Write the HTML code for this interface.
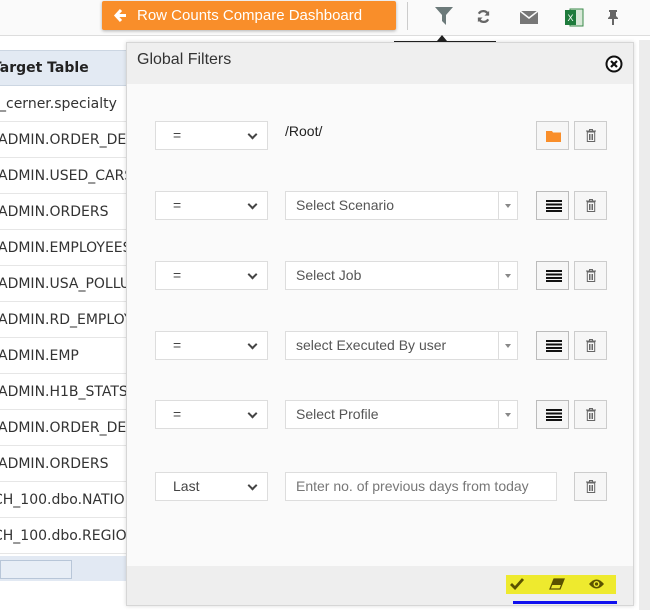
<!DOCTYPE html>
<html><head><style>
*{box-sizing:border-box;margin:0;padding:0}
body{width:650px;height:610px;position:relative;overflow:hidden;background:#fff;font-family:"Liberation Sans",sans-serif}
.abs{position:absolute}
.row{position:absolute;left:0;width:128px;height:36px;border-bottom:1px solid #e6e6e6;font-family:"DejaVu Sans",sans-serif;font-size:14px;color:#333;line-height:36px;padding-left:0;white-space:nowrap;overflow:hidden}
.sel{position:absolute;left:155px;width:113px;height:29px;border:1px solid #ddd;background:#fff;font-size:14px;color:#444;line-height:27px;padding-left:17px}
.sel:after{content:"";position:absolute;right:11px;top:9px;width:5px;height:5px;border-right:2px solid #444;border-bottom:2px solid #444;transform:rotate(45deg)}
.inp{position:absolute;left:285px;width:233px;height:29px;border:1px solid #ddd;background:#fff;font-size:14px;color:#555;line-height:27px;padding-left:10px}
.inp .d{position:absolute;right:0;top:0;width:19px;height:27px;border-left:1px solid #ddd}
.inp .d:after{content:"";position:absolute;left:6px;top:12px;border:3.5px solid transparent;border-top:4px solid #888}
.btn{position:absolute;width:33px;height:29px;border:1px solid #ccc;background:#f6f6f6}
.tr{position:absolute;left:11px;top:7px;width:10px;height:13px}
</style></head><body>
<div class="abs" style="left:0;top:0;width:650px;height:36px;background:#fafafa;border-bottom:1px solid #ddd"></div>
<div class="abs" style="left:102px;top:1px;width:294px;height:29px;background:#f98e2a;border-radius:2px;box-shadow:0 1px 3px rgba(0,0,0,.3);color:#fff;font-size:15px;line-height:29px;padding-left:35px">Row Counts Compare Dashboard</div>
<svg class="abs" style="left:113px;top:8px" width="15" height="15" viewBox="0 0 15 15"><path d="M8 2L3 7.5L8 13M3 7.5H13" stroke="#fff" stroke-width="3" fill="none"/></svg>
<div class="abs" style="left:407px;top:2px;width:1px;height:28px;background:#ccc"></div>
<svg class="abs" style="left:434px;top:6px" width="20" height="20" viewBox="0 0 20 20"><path d="M1 1H19L12 9V19L8 15V9Z" fill="#6c7a7a"/></svg>
<svg class="abs" style="left:476px;top:9px" width="15" height="15" viewBox="0 0 16 16"><path d="M13 6A5.5 5.5 0 0 0 3 5M3 10A5.5 5.5 0 0 0 13 11" stroke="#666" stroke-width="2.4" fill="none"/><path d="M14 2V7H9ZM2 14V9H7Z" fill="#666"/></svg>
<svg class="abs" style="left:520px;top:11px" width="18" height="13" viewBox="0 0 18 13"><rect width="18" height="13" fill="#777"/><path d="M0 0L9 7L18 0" stroke="#fafafa" stroke-width="1.5" fill="none"/></svg>
<svg class="abs" style="left:564px;top:8px" width="20" height="19" viewBox="0 0 20 19"><rect x="6" y="1" width="13" height="17" fill="#d8e8d8" stroke="#3a8a4a"/><rect x="1" y="2" width="11" height="15" fill="#1e7b3c"/><text x="3.5" y="13" font-size="9" fill="#fff" font-family="Liberation Sans">X</text></svg>
<svg class="abs" style="left:607px;top:9px" width="12" height="16" viewBox="0 0 12 16"><path d="M2 1H10V3H9V7L11 9V10H7V16H5V10H1V9L3 7V3H2Z" fill="#666"/></svg>
<div class="abs" style="left:394px;top:41px;width:102px;height:1px;background:#222"></div>
<div class="abs" style="left:437px;top:35px;border:5px solid transparent;border-bottom:6px solid #222;border-top:0"></div>
<div class="abs" style="left:0;top:50px;width:130px;height:36px;background:#e3eaf3;border-top:1px solid #ccd6e2;border-bottom:1px solid #ccd6e2;font-family:'DejaVu Sans',sans-serif;font-weight:bold;font-size:14px;line-height:34px;color:#222;text-indent:-8px">Target Table</div>
<div class="row" style="top:86px;text-indent:-1px">_cerner.specialty</div>
<div class="row" style="top:122px;text-indent:-2px">ADMIN.ORDER_DETAILS</div>
<div class="row" style="top:158px;text-indent:-2px">ADMIN.USED_CARS</div>
<div class="row" style="top:194px;text-indent:-2px">ADMIN.ORDERS</div>
<div class="row" style="top:230px;text-indent:-2px">ADMIN.EMPLOYEES</div>
<div class="row" style="top:266px;text-indent:-2px">ADMIN.USA_POLLUTION</div>
<div class="row" style="top:302px;text-indent:-2px">ADMIN.RD_EMPLOYEE</div>
<div class="row" style="top:338px;text-indent:-2px">ADMIN.EMP</div>
<div class="row" style="top:374px;text-indent:-2px">ADMIN.H1B_STATS</div>
<div class="row" style="top:410px;text-indent:-2px">ADMIN.ORDER_DETAILS</div>
<div class="row" style="top:446px;text-indent:-2px">ADMIN.ORDERS</div>
<div class="row" style="top:482px;text-indent:-7px">CH_100.dbo.NATION</div>
<div class="row" style="top:518px;text-indent:-7px">CH_100.dbo.REGION</div>
<div class="abs" style="left:0;top:556px;width:130px;height:25px;background:#e2e9f3"></div>
<div class="abs" style="left:0;top:560px;width:72px;height:19px;border:1px solid #b8c6d8;background:#e8eef6"></div>
<div class="abs" style="left:639px;top:40px;width:11px;height:570px;background:#ececec"></div>
<div class="abs" style="left:126px;top:42px;width:508px;height:564px;background:#fafafa;border:1px solid #d6d6d6;box-shadow:0 0 4px rgba(0,0,0,.15)">
 <div class="abs" style="left:0;top:0;width:506px;height:41px;background:#efefef;font-size:16px;color:#333;line-height:34px;padding-left:10px">Global Filters</div>
 <div class="abs" style="left:0;top:523px;width:506px;height:39px;background:#eeeeee"></div>
</div>
<svg class="abs" style="left:605px;top:55px" width="18" height="18" viewBox="0 0 18 18"><circle cx="9" cy="9" r="7.5" stroke="#111" stroke-width="2" fill="#fff"/><path d="M6 6L12 12M12 6L6 12" stroke="#111" stroke-width="2.2"/></svg>
<div class="sel" style="top:121px">=</div>
<div class="abs" style="left:285px;top:123px;font-size:14px;color:#222">/Root/</div>
<div class="btn" style="left:536px;top:121px"><svg class="abs" style="left:9px;top:8px" width="15" height="12" viewBox="0 0 15 12"><path d="M0 1H6L7 2.5H15V12H0Z" fill="#f98e2a"/></svg></div>
<div class="sel" style="top:191px">=</div>
<div class="inp" style="top:191px">Select Scenario<div class="d"></div></div>
<div class="sel" style="top:261px">=</div>
<div class="inp" style="top:261px">Select Job<div class="d"></div></div>
<div class="sel" style="top:331px">=</div>
<div class="inp" style="top:331px">select Executed By user<div class="d"></div></div>
<div class="sel" style="top:400px">=</div>
<div class="inp" style="top:400px">Select Profile<div class="d"></div></div>
<div class="sel" style="top:472px">Last</div>
<div class="inp" style="top:472px;width:272px;color:#777">Enter no. of previous days from today</div>
<div class="btn" style="left:536px;top:191px;border-color:#bbb"><svg class="abs" style="left:9px;top:8px" width="16" height="12"><path d="M0 1H16M0 4.5H16M0 8H16M0 11H16" stroke="#111" stroke-width="2"/></svg></div>
<div class="btn" style="left:536px;top:261px;border-color:#bbb"><svg class="abs" style="left:9px;top:8px" width="16" height="12"><path d="M0 1H16M0 4.5H16M0 8H16M0 11H16" stroke="#111" stroke-width="2"/></svg></div>
<div class="btn" style="left:536px;top:331px;border-color:#bbb"><svg class="abs" style="left:9px;top:8px" width="16" height="12"><path d="M0 1H16M0 4.5H16M0 8H16M0 11H16" stroke="#111" stroke-width="2"/></svg></div>
<div class="btn" style="left:536px;top:400px;border-color:#bbb"><svg class="abs" style="left:9px;top:8px" width="16" height="12"><path d="M0 1H16M0 4.5H16M0 8H16M0 11H16" stroke="#111" stroke-width="2"/></svg></div>
<div class="btn" style="left:574px;top:121px"><svg class="tr" viewBox="0 0 10 13"><path d="M0 2H10M3.5 2V0.5H6.5V2M1.3 3H8.7V12.5H1.3Z M3.5 5V11M5 5V11M6.5 5V11" stroke="#666" fill="none" stroke-width="1"/></svg></div>
<div class="btn" style="left:574px;top:191px"><svg class="tr" viewBox="0 0 10 13"><path d="M0 2H10M3.5 2V0.5H6.5V2M1.3 3H8.7V12.5H1.3Z M3.5 5V11M5 5V11M6.5 5V11" stroke="#666" fill="none" stroke-width="1"/></svg></div>
<div class="btn" style="left:574px;top:261px"><svg class="tr" viewBox="0 0 10 13"><path d="M0 2H10M3.5 2V0.5H6.5V2M1.3 3H8.7V12.5H1.3Z M3.5 5V11M5 5V11M6.5 5V11" stroke="#666" fill="none" stroke-width="1"/></svg></div>
<div class="btn" style="left:574px;top:331px"><svg class="tr" viewBox="0 0 10 13"><path d="M0 2H10M3.5 2V0.5H6.5V2M1.3 3H8.7V12.5H1.3Z M3.5 5V11M5 5V11M6.5 5V11" stroke="#666" fill="none" stroke-width="1"/></svg></div>
<div class="btn" style="left:574px;top:400px"><svg class="tr" viewBox="0 0 10 13"><path d="M0 2H10M3.5 2V0.5H6.5V2M1.3 3H8.7V12.5H1.3Z M3.5 5V11M5 5V11M6.5 5V11" stroke="#666" fill="none" stroke-width="1"/></svg></div>
<div class="btn" style="left:574px;top:472px"><svg class="tr" viewBox="0 0 10 13"><path d="M0 2H10M3.5 2V0.5H6.5V2M1.3 3H8.7V12.5H1.3Z M3.5 5V11M5 5V11M6.5 5V11" stroke="#666" fill="none" stroke-width="1"/></svg></div>
<div class="abs" style="left:506px;top:575px;width:110px;height:19px;background:#eeea2e"></div>
<svg class="abs" style="left:510px;top:578px" width="14" height="12" viewBox="0 0 14 12"><path d="M1 6L5 10L13 1" stroke="#5a5200" stroke-width="2.8" fill="none"/></svg>
<svg class="abs" style="left:549px;top:578px" width="16" height="12" viewBox="0 0 16 12"><path d="M5 1H15L11 11H1Z" fill="none" stroke="#5a5200" stroke-width="1.3"/><path d="M5 1H15L12.5 7H2.6Z" fill="#5a5200"/></svg>
<svg class="abs" style="left:588px;top:578px" width="17" height="12" viewBox="0 0 17 12"><path d="M1 6Q8.5 -3 16 6Q8.5 15 1 6Z" fill="#5a5200"/><circle cx="8.5" cy="6" r="3" fill="#eeea2e"/><circle cx="8.5" cy="6" r="1.6" fill="#5a5200"/></svg>
<div class="abs" style="left:513px;top:601px;width:104px;height:3px;background:#1010ee"></div>
</body></html>
